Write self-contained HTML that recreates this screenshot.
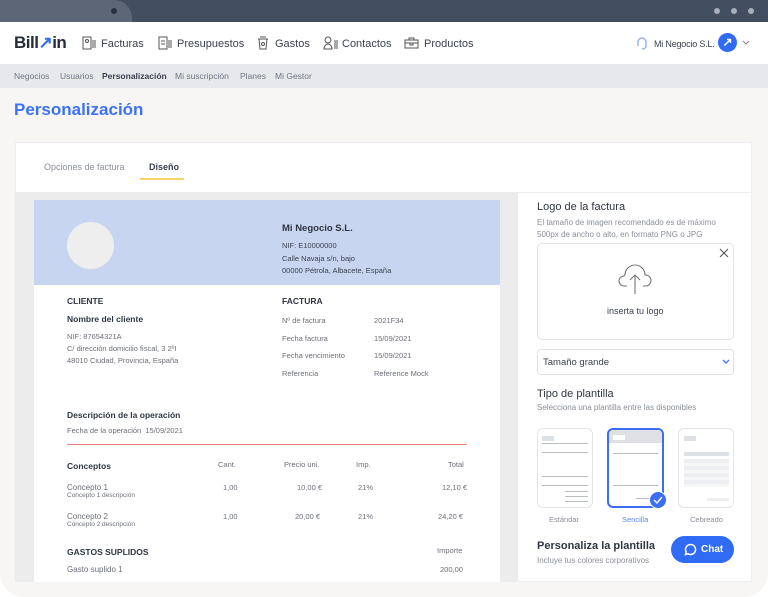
<!DOCTYPE html>
<html><head><meta charset="utf-8"><style>
*{margin:0;padding:0;box-sizing:border-box}
body{width:768px;height:597px;overflow:hidden;background:#fff;font-family:"Liberation Sans",sans-serif;color:#2f3542;position:relative}
.a{position:absolute;white-space:nowrap}
.frame{position:absolute;left:0;top:0;width:768px;height:597px;background:#f7f6f4;border-radius:0 0 24px 24px;overflow:hidden}
.nav{font-size:11px;color:#3b4150}
.sub{font-size:8.5px;color:#707684}
.inv{font-size:7.5px;color:#6b6f78}
.b{font-weight:bold;color:#2f3542}
</style></head><body>
<div class="frame">
<div class="a" style="left:0;top:0;width:768px;height:22px;background:#434f61"></div>
<div class="a" style="left:0;top:0;width:132px;height:22px;background:#5c6677;border-radius:0 18px 0 0"></div>
<div class="a" style="left:111px;top:8px;width:6px;height:6px;border-radius:50%;background:#2a3140"></div>
<div class="a" style="left:714px;top:8px;width:6px;height:6px;border-radius:50%;background:#a9afb8"></div>
<div class="a" style="left:731px;top:8px;width:6px;height:6px;border-radius:50%;background:#a9afb8"></div>
<div class="a" style="left:748px;top:8px;width:6px;height:6px;border-radius:50%;background:#a9afb8"></div>
<div class="a" style="left:0;top:22px;width:768px;height:42px;background:#fff"></div>
<div class="a" style="left:14px;top:33px;font-size:17px;font-weight:bold;color:#252b37;letter-spacing:-0.5px">Bill<span style="color:#2f6bf5">↗</span>in</div>
<svg class="a" style="left:82px;top:36px" width="14" height="14" viewBox="0 0 14 14" fill="none" stroke="#555" stroke-width="1"><rect x="1" y="1" width="8" height="12"/><circle cx="5" cy="5" r="1.5"/><path d="M11 4v8M13 4v8"/></svg>
<div class="a nav" style="left:101px;top:38px">Facturas</div>
<svg class="a" style="left:158px;top:36px" width="14" height="14" viewBox="0 0 14 14" fill="none" stroke="#555" stroke-width="1"><rect x="1" y="1" width="8" height="12"/><path d="M3 5h4M3 8h4M11 4v8M13 4v8"/></svg>
<div class="a nav" style="left:177px;top:38px">Presupuestos</div>
<svg class="a" style="left:257px;top:36px" width="12" height="14" viewBox="0 0 12 14" fill="none" stroke="#555" stroke-width="1"><path d="M1 3h10M2 3l1 10h6l1-10M3 1h6"/><circle cx="6" cy="8" r="1.5"/></svg>
<div class="a nav" style="left:275px;top:38px">Gastos</div>
<svg class="a" style="left:323px;top:36px" width="16" height="14" viewBox="0 0 16 14" fill="none" stroke="#555" stroke-width="1"><circle cx="5" cy="4" r="3"/><path d="M1 13c0-3 2-5 4-5s4 2 4 5zM12 4v9M14 4v9"/></svg>
<div class="a nav" style="left:342px;top:38px">Contactos</div>
<svg class="a" style="left:404px;top:37px" width="15" height="12" viewBox="0 0 15 12" fill="none" stroke="#555" stroke-width="1"><rect x="1" y="3" width="13" height="8"/><path d="M5 3V1h5v2M1 6h13M6 6v2h3V6"/></svg>
<div class="a nav" style="left:424px;top:38px">Productos</div>
<svg class="a" style="left:636px;top:36px" width="12" height="14" viewBox="0 0 12 14" fill="none" stroke="#8aa6f0" stroke-width="1.3"><path d="M2 8V6a4 4 0 0 1 8 0v2M2 7v3M10 7v3M10 10c0 2-2 3-4 3"/></svg>
<div class="a" style="left:654px;top:39px;font-size:9px;color:#3b4150;letter-spacing:-0.2px">Mi Negocio S.L.</div>
<div class="a" style="left:718px;top:33px;width:19px;height:19px;border-radius:50%;background:#2f6bf5;color:#fff;font-size:12px;font-weight:bold;text-align:center;line-height:19px">↗</div>
<svg class="a" style="left:742px;top:40px" width="8" height="5" viewBox="0 0 8 5" fill="none" stroke="#888" stroke-width="1"><path d="M1 1l3 3 3-3"/></svg>
<div class="a" style="left:0;top:64px;width:768px;height:24px;background:#e6e8ec"></div>
<div class="a sub" style="left:14px;top:71px">Negocios</div>
<div class="a sub" style="left:60px;top:71px">Usuarios</div>
<div class="a sub" style="left:102px;top:71px;color:#3b4150;font-weight:bold">Personalización</div>
<div class="a sub" style="left:175px;top:71px">Mi suscripción</div>
<div class="a sub" style="left:240px;top:71px">Planes</div>
<div class="a sub" style="left:275px;top:71px">Mi Gestor</div>
<div class="a" style="left:14px;top:100px;font-size:17px;font-weight:bold;color:#3b72f6">Personalización</div>
<div class="a" style="left:15px;top:142px;width:737px;height:440px;background:#fff;border:1px solid #eceef1"></div>
<div class="a" style="left:44px;top:162px;font-size:9px;color:#8a8f99">Opciones de factura</div>
<div class="a" style="left:149px;top:162px;font-size:9px;color:#3b4150;font-weight:bold">Diseño</div>
<div class="a" style="left:140px;top:178px;width:44px;height:2px;background:#f6d36b"></div>
<div class="a" style="left:15px;top:192px;width:503px;height:390px;background:#ececec"></div>
<div class="a" style="left:518px;top:192px;width:234px;height:1px;background:#eceef1"></div>
<div class="a" style="left:34px;top:200px;width:466px;height:382px;background:#fff"></div>
<div class="a" style="left:34px;top:200px;width:466px;height:85px;background:#c8d5f0"></div>
<div class="a" style="left:67px;top:222px;width:47px;height:47px;border-radius:50%;background:#eeeeee"></div>
<div class="a b" style="left:282px;top:223px;font-size:9.5px">Mi Negocio S.L.</div>
<div class="a inv" style="left:282px;top:241px;color:#3b4150">NIF: E10000000</div>
<div class="a inv" style="left:282px;top:254px;color:#3b4150">Calle Navaja s/n, bajo</div>
<div class="a inv" style="left:282px;top:266px;color:#3b4150">00000 Pétrola, Albacete, España</div>
<div class="a b" style="left:67px;top:296px;font-size:8.5px">CLIENTE</div>
<div class="a b" style="left:67px;top:314px;font-size:8.5px">Nombre del cliente</div>
<div class="a inv" style="left:67px;top:332px">NIF: 87654321A</div>
<div class="a inv" style="left:67px;top:344px">C/ dirección domicilio fiscal, 3 2ºI</div>
<div class="a inv" style="left:67px;top:356px">48010 Ciudad, Provincia, España</div>
<div class="a b" style="left:282px;top:296px;font-size:8.5px">FACTURA</div>
<div class="a inv" style="left:282px;top:316px">Nº de factura</div><div class="a inv" style="left:374px;top:316px">2021F34</div>
<div class="a inv" style="left:282px;top:334px">Fecha factura</div><div class="a inv" style="left:374px;top:334px">15/09/2021</div>
<div class="a inv" style="left:282px;top:351px">Fecha vencimiento</div><div class="a inv" style="left:374px;top:351px">15/09/2021</div>
<div class="a inv" style="left:282px;top:369px">Referencia</div><div class="a inv" style="left:374px;top:369px">Reference Mock</div>
<div class="a b" style="left:67px;top:410px;font-size:8.5px">Descripción de la operación</div>
<div class="a inv" style="left:67px;top:426px">Fecha de la operación&nbsp; 15/09/2021</div>
<div class="a" style="left:67px;top:444px;width:400px;height:1px;background:#ef7a7a"></div>
<div class="a b" style="left:67px;top:461px;font-size:8.5px">Conceptos</div>
<div class="a inv" style="left:218px;top:460px">Cant.</div>
<div class="a inv" style="left:284px;top:460px">Precio uni.</div>
<div class="a inv" style="left:356px;top:460px">Imp.</div>
<div class="a inv" style="left:448px;top:460px">Total</div>
<div class="a inv" style="left:67px;top:483px;font-size:8px">Concepto 1</div>
<div class="a inv" style="left:67px;top:492px;font-size:6.5px">Concepto 1 descripción</div>
<div class="a inv" style="left:223px;top:483px">1,00</div><div class="a inv" style="left:297px;top:483px">10,00 €</div><div class="a inv" style="left:358px;top:483px">21%</div><div class="a inv" style="left:442px;top:483px">12,10 €</div>
<div class="a inv" style="left:67px;top:512px;font-size:8px">Concepto 2</div>
<div class="a inv" style="left:67px;top:521px;font-size:6.5px">Concepto 2 descripción</div>
<div class="a inv" style="left:223px;top:512px">1,00</div><div class="a inv" style="left:295px;top:512px">20,00 €</div><div class="a inv" style="left:358px;top:512px">21%</div><div class="a inv" style="left:438px;top:512px">24,20 €</div>
<div class="a b" style="left:67px;top:547px;font-size:8.5px">GASTOS SUPLIDOS</div>
<div class="a inv" style="left:437px;top:546px">Importe</div>
<div class="a inv" style="left:67px;top:565px;font-size:8px">Gasto suplido 1</div>
<div class="a inv" style="left:440px;top:565px">200,00</div>
<div class="a" style="left:537px;top:201px;font-size:11px;color:#2f3542">Logo de la factura</div>
<div class="a" style="left:537px;top:217px;font-size:8px;color:#8a8f99;line-height:12px;white-space:normal;width:200px">El tamaño de imagen recomendado es de máximo 500px de ancho o alto, en formato PNG o JPG</div>
<div class="a" style="left:537px;top:243px;width:197px;height:97px;border:1px solid #dfe2e7;border-radius:5px"></div>
<svg class="a" style="left:719px;top:248px" width="10" height="10" viewBox="0 0 10 10" stroke="#555" stroke-width="1.1"><path d="M1 1l8 8M9 1l-8 8"/></svg>
<svg class="a" style="left:617px;top:262px" width="36" height="34" viewBox="0 0 36 34" fill="none" stroke="#777" stroke-width="1.1"><path d="M10 24H7a5 5 0 0 1 0-10 1 1 0 0 1 1-1 10 10 0 0 1 20 0 5 5 0 0 1 1 11h-3"/><path d="M18 32V13M13 18l5-5 5 5"/></svg>
<div class="a" style="left:607px;top:306px;font-size:9px;color:#3b4150">inserta tu logo</div>
<div class="a" style="left:537px;top:349px;width:197px;height:26px;border:1px solid #dfe2e7;border-radius:4px"></div>
<div class="a" style="left:543px;top:357px;font-size:9.5px;color:#3b4150">Tamaño grande</div>
<svg class="a" style="left:722px;top:359px" width="8" height="5" viewBox="0 0 8 5" fill="none" stroke="#4a78f0" stroke-width="1.4"><path d="M1 1l3 3 3-3"/></svg>
<div class="a" style="left:537px;top:388px;font-size:11px;color:#2f3542">Tipo de plantilla</div>
<div class="a" style="left:537px;top:403px;font-size:8px;color:#8a8f99">Selecciona una plantilla entre las disponibles</div>
<div class="a" style="left:537px;top:428px;width:56px;height:80px;border:1px solid #e3e5e9;border-radius:6px"></div>
<div class="a" style="left:542px;top:436px;width:12px;height:5px;background:#dde0e5"></div>
<div class="a" style="left:542px;top:443px;width:46px;height:1px;background:#b9bdc4"></div>
<div class="a" style="left:542px;top:452px;width:46px;height:1px;background:#b9bdc4"></div>
<div class="a" style="left:542px;top:476px;width:46px;height:1px;background:#b9bdc4"></div>
<div class="a" style="left:542px;top:485px;width:46px;height:1px;background:#b9bdc4"></div>
<div class="a" style="left:565px;top:491px;width:23px;height:1px;background:#b9bdc4"></div>
<div class="a" style="left:565px;top:496px;width:23px;height:1px;background:#b9bdc4"></div>
<div class="a" style="left:565px;top:501px;width:23px;height:1px;background:#b9bdc4"></div>
<div class="a" style="left:549px;top:515px;font-size:7.5px;color:#8a8f99">Estándar</div>
<div class="a" style="left:607px;top:428px;width:57px;height:80px;border:2px solid #3b6ef5;border-radius:6px;overflow:hidden"><div style="height:13px;background:#dfe1e5"></div></div>
<div class="a" style="left:613px;top:435px;width:12px;height:5px;background:#fff"></div>
<div class="a" style="left:613px;top:453px;width:45px;height:1px;background:#b9bdc4"></div>
<div class="a" style="left:613px;top:485px;width:45px;height:1px;background:#b9bdc4"></div>
<div class="a" style="left:636px;top:498px;width:14px;height:1px;background:#b9bdc4"></div>
<div class="a" style="left:649px;top:491px;width:18px;height:18px;border-radius:50%;background:#3b6ef5;border:1.5px solid #fff"></div>
<svg class="a" style="left:653px;top:496px" width="10" height="8" viewBox="0 0 10 8" fill="none" stroke="#fff" stroke-width="1.4"><path d="M1 4l3 3 5-6"/></svg>
<div class="a" style="left:622px;top:515px;font-size:7.5px;color:#5f87f3">Sencilla</div>
<div class="a" style="left:678px;top:428px;width:56px;height:80px;border:1px solid #e3e5e9;border-radius:6px"></div>
<div class="a" style="left:684px;top:436px;width:12px;height:5px;background:#dde0e5"></div>
<div class="a" style="left:684px;top:452px;width:45px;height:4px;background:#dde0e5"></div>
<div class="a" style="left:684px;top:459px;width:45px;height:28px;background:repeating-linear-gradient(#eceef1 0 4px,#f7f7f8 4px 7px)"></div>
<div class="a" style="left:707px;top:498px;width:22px;height:3px;background:#eceef1"></div>
<div class="a" style="left:690px;top:515px;font-size:7.5px;color:#8a8f99">Cebreado</div>
<div class="a" style="left:537px;top:540px;font-size:11px;color:#2f3542;font-weight:bold">Personaliza la plantilla</div>
<div class="a" style="left:537px;top:556px;font-size:8px;color:#8a8f99">Incluye tus colores corporativos</div>
<div class="a" style="left:671px;top:536px;width:63px;height:27px;border-radius:14px;background:#2f6bf5"></div>
<svg class="a" style="left:684px;top:543px" width="13" height="13" viewBox="0 0 13 13" fill="none" stroke="#fff" stroke-width="1.5"><path d="M6.5 1.5a5 5 0 1 1-2.5 9.3L1.5 11.5l.7-2.5A5 5 0 0 1 6.5 1.5z"/></svg>
<div class="a" style="left:701px;top:544px;font-size:10px;color:#fff;font-weight:bold">Chat</div>
</div>
</body></html>
